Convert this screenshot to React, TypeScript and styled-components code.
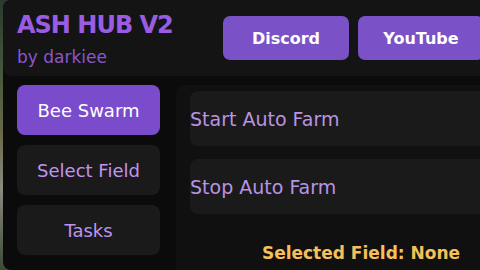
import React from "react";
import styled, { createGlobalStyle } from "styled-components";

const Global = createGlobalStyle`
  *, *::before, *::after { box-sizing: border-box; }
  html, body { margin: 0; padding: 0; width: 480px; height: 270px; overflow: hidden; }
  body {
    background: linear-gradient(180deg, #2c3a2c 0%, #4a5a3e 30%, #6b6a4a 50%, #8a8a80 70%, #3b4a36 100%);
    font-family: "DejaVu Sans", "Liberation Sans", sans-serif;
  }
`;

const Window = styled.div`
  margin-left: 3px;
  width: 560px;
  height: 270px;
  background: #0b0b0b;
  border-radius: 8px 0 0 8px;
  display: flex;
  flex-direction: column;
`;

const Header = styled.div`
  height: 76px;
  flex: 0 0 76px;
  background: #141414;
  border-radius: 8px;
  display: flex;
  align-items: center;
  padding-left: 14px;
`;

const TitleBlock = styled.div`
  flex: 0 0 206px;
  display: flex;
  flex-direction: column;
  margin-top: 2px;
`;

const Title = styled.div`
  color: #9b5ce4;
  font-weight: 700;
  font-size: 24px;
  line-height: 28px;
  letter-spacing: -1px;
`;

const Sub = styled.div`
  color: #8b55cf;
  font-size: 17px;
  line-height: 22px;
  margin-top: 7px;
`;

const LinkRow = styled.div`
  display: flex;
  gap: 9px;
`;

const LinkButton = styled.div`
  width: 126px;
  height: 44px;
  border-radius: 7px;
  background: #7a51c7;
  color: #ffffff;
  font-weight: 700;
  font-size: 16px;
  display: flex;
  align-items: center;
  justify-content: center;
`;

const Main = styled.div`
  flex: 1;
  display: flex;
  gap: 16px;
  padding: 9px 0 0 14px;
  min-height: 0;
`;

const Sidebar = styled.div`
  flex: 0 0 143px;
  display: flex;
  flex-direction: column;
  gap: 10px;
`;

const TabButton = styled.div<{ $active?: boolean }>`
  height: 50px;
  border-radius: 8px;
  background: ${(p) => (p.$active ? "#7a4bcb" : "#1a1a1a")};
  color: ${(p) => (p.$active ? "#ffffff" : "#c193ee")};
  font-size: 18px;
  display: flex;
  align-items: center;
  justify-content: center;
`;

const Panel = styled.div`
  flex: 0 0 370px;
  background: #101010;
  border-radius: 8px 8px 0 0;
  padding: 6px 14px 0 14px;
  display: flex;
  flex-direction: column;
  gap: 13px;
`;

const Row = styled.div`
  height: 55px;
  border-radius: 8px;
  background: #1a1a1a;
  color: #b993e4;
  font-size: 19px;
  display: flex;
  align-items: center;
`;

const Status = styled.div`
  margin-top: 16px;
  text-align: center;
  color: #f5c05a;
  font-weight: 700;
  font-size: 17px;
`;

export default function App() {
  return (
    <>
      <Global />
      <Window>
        <Header>
          <TitleBlock>
            <Title>ASH HUB V2</Title>
            <Sub>by darkiee</Sub>
          </TitleBlock>
          <LinkRow>
            <LinkButton>Discord</LinkButton>
            <LinkButton>YouTube</LinkButton>
          </LinkRow>
        </Header>
        <Main>
          <Sidebar>
            <TabButton $active>Bee Swarm</TabButton>
            <TabButton>Select Field</TabButton>
            <TabButton>Tasks</TabButton>
          </Sidebar>
          <Panel>
            <Row>Start Auto Farm</Row>
            <Row>Stop Auto Farm</Row>
            <Status>Selected Field: None</Status>
          </Panel>
        </Main>
      </Window>
    </>
  );
}
